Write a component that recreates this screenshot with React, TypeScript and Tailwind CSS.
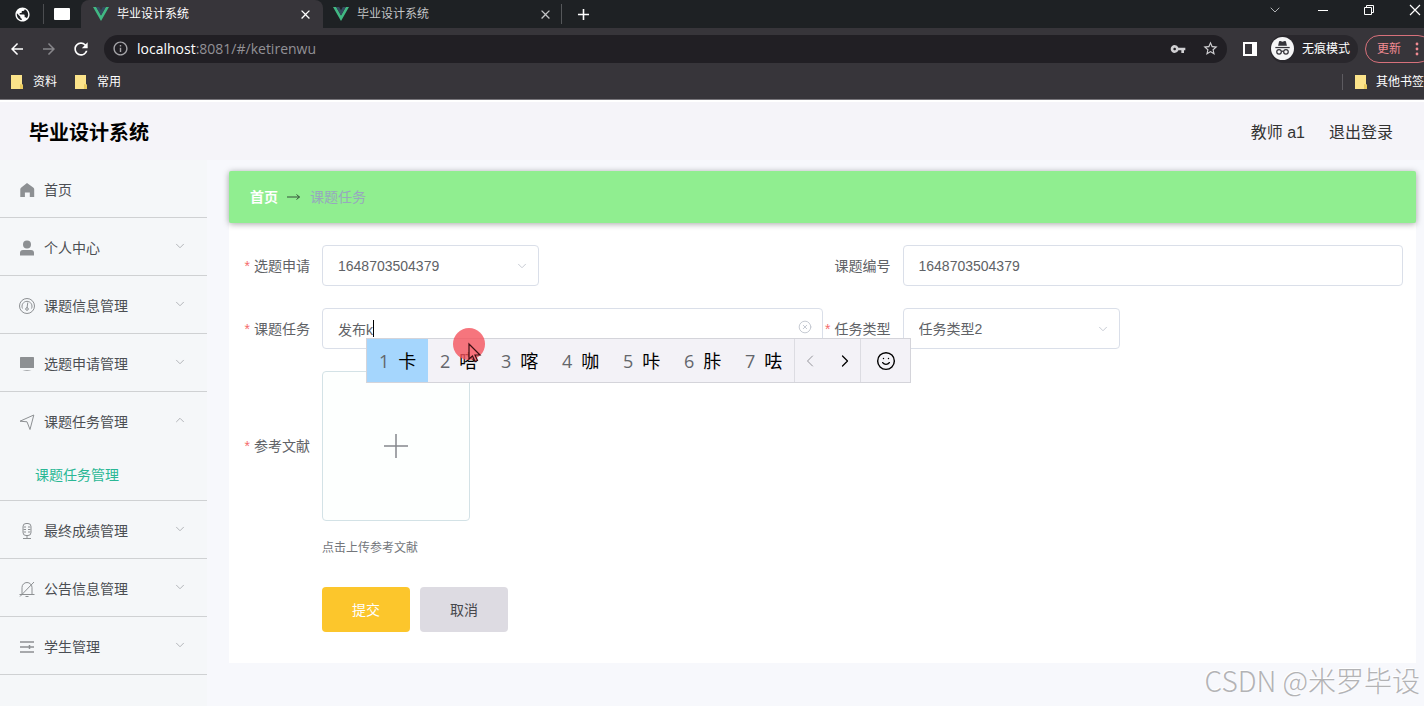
import React, { useState } from 'react';
import {
  MdArrowBack,
  MdArrowForward,
  MdRefresh,
  MdInfoOutline,
  MdVpnKey,
  MdStarOutline,
  MdPublic,
  MdClose,
  MdAdd,
} from 'react-icons/md';
import { ChevronDown, ChevronUp, ChevronLeft, ChevronRight, Smile, CircleX } from 'lucide-react';

const UI_FONT = "font-['Liberation_Sans','Noto_Sans_CJK_SC',sans-serif]";
const CHROME_FONT = "font-['Open_Sans','Noto_Sans_CJK_SC',sans-serif]";

const VueLogo = () => (
  <svg viewBox="0 0 16 14" className="h-[14px] w-4 shrink-0">
    <path d="M0 0h3.2L8 8.4 12.8 0H16L8 14z" fill="#41b883" />
    <path d="M3.2 0h3L8 3.2 9.8 0h3L8 8.4z" fill="#35495e" />
  </svg>
);

const Folder = () => (
  <svg viewBox="0 0 14 16" className="h-4 w-[14px] shrink-0">
    <path d="M1 1h11v9l1 1v4H1z" fill="#fbe38a" />
    <path d="M10 10l3 1v4h-3z" fill="#e9c95c" />
  </svg>
);

const Incognito = () => (
  <svg viewBox="0 0 24 24" className="h-[23px] w-[23px] shrink-0">
    <circle cx="12" cy="12" r="12" fill="#f5f5f6" />
    <path d="M8.4 4.8q.4-.8 1.300-.5l2.300.6 2.300-.6q.9-.3 1.300.5l1 4.400H7.400z" fill="#35343a" />
    <path d="M4.500 11h15" stroke="#35343a" strokeWidth="1.300" />
    <g fill="none" stroke="#35343a" strokeWidth="1.300">
      <circle cx="8.400" cy="15.500" r="2.400" />
      <circle cx="15.600" cy="15.500" r="2.400" />
      <path d="M10.800 15.200q1.200-.8 2.400 0" />
    </g>
  </svg>
);

const iconBox = 'h-[18px] w-[18px] shrink-0';

const icons: Record<string, React.ReactNode> = {
  home: (
    <svg viewBox="0 0 18 18" className={iconBox} fill="#8d9093">
      <path d="M9 2L15.500 6.800q.7.600.7 1.500V16h-4.400v-4.500H6.900V16H2.300V8.300q0-.9.7-1.500z" />
    </svg>
  ),
  user: (
    <svg viewBox="0 0 18 18" className={iconBox} fill="#8d9093">
      <circle cx="9" cy="5.500" r="4" />
      <path d="M2 16.500v-2.500q0-3 3-3h8q3 0 3 3v2.500z" />
    </svg>
  ),
  odometer: (
    <svg viewBox="0 0 18 18" className={iconBox} fill="none" stroke="#8d9093">
      <circle cx="9" cy="9" r="7.500" />
      <path d="M4.500 11.500A5 5 0 1 1 13.500 11.500M9.800 5.500L9 11" />
      <circle cx="9" cy="12" r="1.300" />
    </svg>
  ),
  platform: (
    <svg viewBox="0 0 18 18" className={iconBox} fill="#8d9093">
      <rect x="2" y="2" width="14" height="11" rx=".6" />
      <path d="M4.500 15.700q4.500-1.500 9 0z" />
    </svg>
  ),
  position: (
    <svg viewBox="0 0 18 18" className={iconBox} fill="none" stroke="#8d9093" strokeLinejoin="round">
      <path d="M2 8.200L15.800 2 12 16.500 9 8.800z" />
    </svg>
  ),
  microphone: (
    <svg viewBox="0 0 18 18" className={iconBox} fill="none" stroke="#8d9093">
      <rect x="5" y="1.500" width="8" height="12" rx="3" />
      <path d="M5.500 5h2.500M10 5h2.500M5.500 7.500h2.500M10 7.500h2.500M5.500 10h2.500M10 10h2.500M9 13.500v3M5 16.500h8" />
    </svg>
  ),
  bell: (
    <svg viewBox="0 0 18 18" className={iconBox} fill="none" stroke="#8d9093">
      <path d="M4 14V7.500a5 5 0 0 1 10 0V14M1.500 14.500h15M7.500 16.500h3M2 16.500L16 2" />
    </svg>
  ),
  operation: (
    <svg viewBox="0 0 18 18" className={iconBox} fill="none" stroke="#8d9093" strokeWidth="1.500">
      <path d="M2 4h14M2 9h14M2 14h14M11.500 7v4" />
    </svg>
  ),
};

interface MenuItem {
  icon: string;
  label: string;
  children?: string[];
}

const menu: MenuItem[] = [
  { icon: 'user', label: '个人中心' },
  { icon: 'odometer', label: '课题信息管理' },
  { icon: 'platform', label: '选题申请管理' },
  { icon: 'position', label: '课题任务管理', children: ['课题任务管理'] },
  { icon: 'microphone', label: '最终成绩管理' },
  { icon: 'bell', label: '公告信息管理' },
  { icon: 'operation', label: '学生管理' },
];

const candidates = ['卡', '嗒', '喀', '咖', '咔', '胩', '呿'];

const BrowserChrome = () => (
  <div className={`${CHROME_FONT} flex flex-col overflow-hidden border-b border-[#77757a] bg-[#37353a] text-xs text-white`}>
    <div className="flex h-7 items-stretch bg-[#1e2124]">
      <div className="flex w-[81px] items-center">
        <MdPublic size={17} className="ml-[14px]" />
        <span className="ml-3 h-5 w-px bg-[#4b4d50]" />
        <span className="ml-[10px] h-3 w-4 rounded-[1px] bg-white" />
      </div>
      <div className="flex w-[242px] items-center rounded-t-lg bg-[#37353a] pl-3 pr-[10px]">
        <VueLogo />
        <span className="ml-2">毕业设计系统</span>
        <button aria-label="关闭标签页" className="ml-auto"><MdClose size={15} /></button>
      </div>
      <div className="flex w-[238px] items-center pl-[10px] pr-2 text-[#c3c5c7]">
        <VueLogo />
        <span className="ml-2">毕业设计系统</span>
        <button aria-label="关闭标签页" className="ml-auto"><MdClose size={15} /></button>
      </div>
      <span className="h-5 w-px self-center bg-[#55575a]" />
      <button aria-label="新标签页" className="ml-3"><MdAdd size={19} /></button>
      <div className="ml-auto flex h-5 items-center gap-[34px] pr-[3px]">
        <button aria-label="搜索标签页"><ChevronDown size={16} strokeWidth={1.5} className="text-[#b0b2b4]" /></button>
        <button aria-label="最小化">
          <svg viewBox="0 0 12 12" className="h-3 w-3" stroke="#fff" fill="none"><path d="M1 6.500h10" /></svg>
        </button>
        <button aria-label="还原">
          <svg viewBox="0 0 12 12" className="h-3 w-3" stroke="#fff" fill="none">
            <path d="M1.500 3.500h7v7h-7zM3.500 3.500v-2h7v7h-2" />
          </svg>
        </button>
        <button aria-label="关闭">
          <svg viewBox="0 0 12 12" className="h-3 w-3" stroke="#fff" fill="none" strokeWidth="1.200"><path d="M1 1l10 10M11 1L1 11" /></svg>
        </button>
      </div>
    </div>

    <div className="flex h-[41px] items-center">
      <button aria-label="后退" className="ml-2"><MdArrowBack size={18} /></button>
      <button aria-label="前进" className="ml-[14px] text-[#87868a]"><MdArrowForward size={18} /></button>
      <button aria-label="重新加载" className="ml-[13px]"><MdRefresh size={20} /></button>
      <div className="ml-[13px] flex h-7 flex-1 items-center rounded-full bg-[#211f24] px-2">
        <MdInfoOutline size={17} className="text-[#a5a4a8]" />
        <span className="ml-2 text-sm text-[#929196]">
          <span className="text-white">localhost</span>:8081/#/ketirenwu
        </span>
        <button aria-label="密码" className="ml-auto text-[#d0cfd2]"><MdVpnKey size={16} /></button>
        <button aria-label="收藏" className="ml-4 text-[#d0cfd2]"><MdStarOutline size={17} /></button>
      </div>
      <button aria-label="侧边栏" className="ml-4 h-[14px] w-[14px] border-2 border-r-[5px] border-white" />
      <div className="ml-[13px] flex h-7 items-center rounded-full bg-[#29272c] pl-[1px] pr-2">
        <Incognito />
        <span className="ml-2">无痕模式</span>
      </div>
      <button className="-mr-2 ml-[7px] flex h-7 items-center rounded-full border border-[#d8717b] pl-[11px] pr-3 text-[#f28b92]">
        更新
        <svg viewBox="0 0 4 14" className="ml-[14px] h-[14px] w-1" fill="#f28b92">
          <circle cx="2" cy="2" r="1.400" />
          <circle cx="2" cy="7" r="1.400" />
          <circle cx="2" cy="12" r="1.400" />
        </svg>
      </button>
    </div>

    <div className="flex h-[30px] items-center pb-1">
      <a href="#" className="ml-[10px] flex items-center gap-[9px]"><Folder />资料</a>
      <a href="#" className="ml-[17px] flex items-center gap-[9px]"><Folder />常用</a>
      <span className="ml-auto h-4 w-px bg-[#5d5b60]" />
      <a href="#" className="ml-[11px] flex items-center gap-2"><Folder />其他书签</a>
    </div>
  </div>
);

const Sidebar = () => {
  const [open, setOpen] = useState('课题任务管理');

  return (
    <nav className="w-[207px] shrink-0 bg-[#f5f7f9] text-sm text-[#4b4e53]">
      <a href="#" className="flex h-[58px] items-center gap-2 border-b border-[#cfd1d3] pl-[18px] pt-[2px]">
        {icons.home}
        首页
      </a>
      {menu.map((item) => {
        const isOpen = open === item.label;
        const Chevron = isOpen ? ChevronUp : ChevronDown;
        return (
          <div key={item.label} className="border-b border-[#cfd1d3]">
            <button
              onClick={() => setOpen(isOpen ? '' : item.label)}
              className="flex h-[57px] w-full items-center gap-2 pl-[18px] pr-5 pt-[2px]"
            >
              {icons[item.icon]}
              {item.label}
              <Chevron size={14} strokeWidth={1.5} className="mb-1 ml-auto text-[#a9acb0]" />
            </button>
            {isOpen && item.children?.map((child) => (
              <a key={child} href="#" className="flex h-[51px] items-center pl-[35px] text-[#2ab795]">{child}</a>
            ))}
          </div>
        );
      })}
    </nav>
  );
};

interface FieldProps {
  id: string;
  label: string;
  required?: boolean;
  children: React.ReactNode;
}

const Field: React.FC<FieldProps> = ({ id, label, required, children }) => (
  <div className="flex items-center">
    <label htmlFor={id} className="w-20 shrink-0 pr-3 text-right whitespace-nowrap">
      {required && <span className="mr-1 text-[#f56c6c]">*</span>}
      {label}
    </label>
    <div className="relative min-w-0 flex-1">{children}</div>
  </div>
);

const inputClass = 'h-[41px] w-full rounded border border-[#dadfe9] bg-white px-[15px] text-[#606266] outline-none';

const Select = ({ id, value }: { id: string; value: string }) => (
  <div className="relative w-[217px]">
    <select id={id} defaultValue={value} className={`${inputClass} appearance-none`}>
      <option>{value}</option>
    </select>
    <ChevronDown size={14} strokeWidth={1.5} className="pointer-events-none absolute right-[10px] top-[14px] text-[#bfc4cd]" />
  </div>
);

const ImeBar = () => (
  <div className={`${CHROME_FONT} absolute left-11 top-[30px] z-10 flex h-[45px] border border-[#d4d4da] bg-[#f3f2f7] text-lg text-black`}>
    {candidates.map((word, i) => (
      <button
        key={word}
        className={`flex w-[61px] items-center gap-[9px] pl-3 ${i === 0 ? 'bg-[#a5d6fd]' : ''}`}
      >
        <span className="text-[#63666b]">{i + 1}</span>
        {word}
      </button>
    ))}
    <div className="flex w-[67px] items-center justify-between border-x border-[#dcdce2] px-[5px]">
      <button aria-label="上一页"><ChevronLeft size={20} strokeWidth={1.2} className="text-[#94949a]" /></button>
      <button aria-label="下一页"><ChevronRight size={20} strokeWidth={1.5} /></button>
    </div>
    <button aria-label="表情" className="flex w-[49px] items-center justify-center"><Smile size={20} strokeWidth={1.7} /></button>
    <svg viewBox="0 0 34 40" className="pointer-events-none absolute -top-3 left-[85px] h-10 w-[34px]">
      <circle cx="17" cy="17" r="16" fill="#f4535c" fillOpacity=".8" />
      <path d="M17 17v15l3.500-3 2.500 5.500 2.500-1-2.500-5.500h5z" fill="#f7707a" stroke="#3a1013" strokeWidth="1.200" />
    </svg>
  </div>
);

const TaskForm = () => {
  const [task, setTask] = useState('发布k');

  return (
    <form className="bg-white px-[13px] pb-[31px] pt-[22px] text-sm text-[#606266]" onSubmit={(e) => e.preventDefault()}>
      <div className="grid grid-cols-2 gap-y-[22px]">
        <Field id="apply" label="选题申请" required>
          <Select id="apply" value="1648703504379" />
        </Field>
        <Field id="number" label="课题编号">
          <input id="number" className={inputClass} defaultValue="1648703504379" />
        </Field>
        <Field id="task" label="课题任务" required>
          <input id="task" className={inputClass} value={task} onChange={(e) => setTask(e.target.value)} />
          <span className="absolute left-[51px] top-3 h-[17px] w-px bg-black" />
          <CircleX size={14} strokeWidth={1.5} className="absolute right-[11px] top-3 text-[#bfc4cd]" />
          <ImeBar />
        </Field>
        <Field id="type" label="任务类型" required>
          <Select id="type" value="任务类型2" />
        </Field>
      </div>

      <div className="mt-[22px]">
        <Field id="upload" label="参考文献" required>
          <button id="upload" type="button" aria-label="上传" className="flex h-[150px] w-[148px] items-center justify-center rounded border border-[#d3e2e6] bg-[#fdfffe]">
            <svg viewBox="0 0 24 24" className="h-6 w-6" stroke="#85888d" strokeWidth="1.500">
              <path d="M12 0v24M0 12h24" />
            </svg>
          </button>
        </Field>
      </div>
      <p className="mt-[17px] pl-20 text-xs leading-5 text-[#73767b]">点击上传参考文献</p>

      <div className="mt-[29px] flex gap-[10px] pl-20">
        <button type="submit" className="h-[45px] w-[88px] rounded bg-[#fcc62c] text-white">提交</button>
        <button type="button" className="h-[45px] w-[88px] rounded bg-[#dddbe2] text-[#45474b]">取消</button>
      </div>
    </form>
  );
};

export default function App() {
  return (
    <div className={`${UI_FONT} relative flex min-h-screen flex-col overflow-hidden bg-[#f7f8fc]`}>
      <BrowserChrome />
      <header className="flex h-[60px] items-center justify-between border-t-2 border-white bg-[#f5f4f9] pl-[29px] pr-[31px] pt-1 text-[#333]">
        <h1 className="text-xl font-bold text-black">毕业设计系统</h1>
        <div className="flex gap-6 text-base">
          <span>教师 a1</span>
          <a href="#">退出登录</a>
        </div>
      </header>
      <div className="flex flex-1">
        <Sidebar />
        <main className="min-w-0 flex-1 pb-8 pl-[22px] pr-2 pt-[11px]">
          <div className="relative flex h-[52px] items-center rounded-xs bg-[#90ee90] pl-[21px] text-sm shadow-[0_1px_6px_rgba(0,0,0,0.35)]">
            <a href="#" className="font-bold text-white">首页</a>
            <svg viewBox="0 0 14 8" className="mx-[9px] h-2 w-[14px]" fill="none" stroke="#34503a">
              <path d="M0 4h12.500M9.500 1.500l3 2.500-3 2.500" />
            </svg>
            <span className="text-[#97a8be]">课题任务</span>
          </div>
          <TaskForm />
        </main>
      </div>
      <div className="pointer-events-none absolute bottom-1 right-1 font-['Noto_Sans_CJK_SC',sans-serif] text-[28px] font-light leading-11 text-[#b3b3b5] [text-shadow:-1px_-1px_0_#fff]">
        CSDN @米罗毕设
      </div>
    </div>
  );
}
